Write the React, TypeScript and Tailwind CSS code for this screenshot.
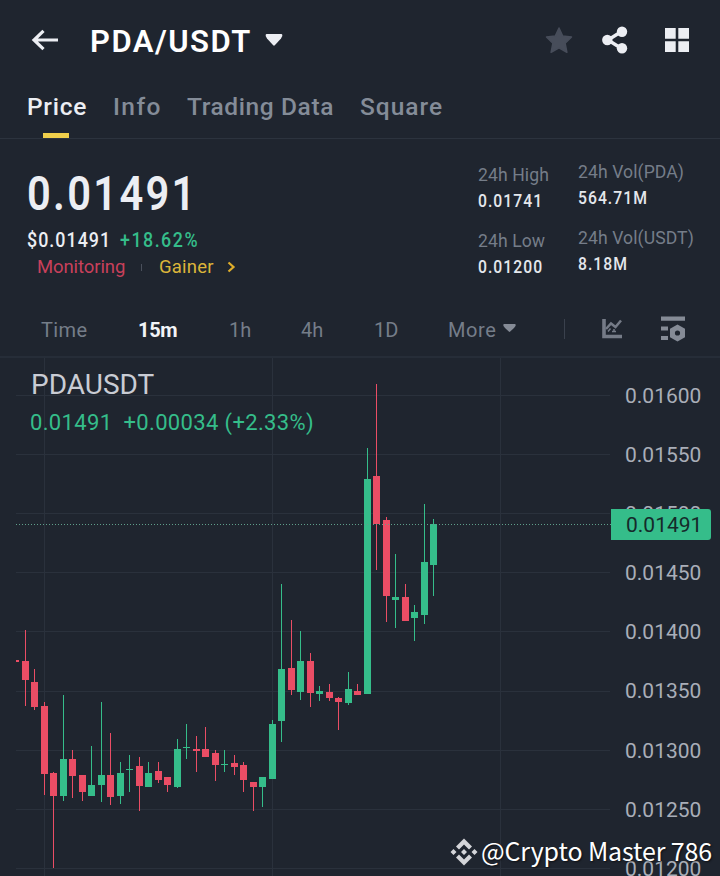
import React from "react";

const UP = "#35bd8a";
const DOWN = "#ea4d65";

// [wick top, body top, body bottom, wick bottom, up?]
type Candle = [number, number, number, number, 0 | 1];

const CANDLES: Candle[] = [
  [630, 661, 680, 706, 0],
  [669, 682, 707, 710, 0],
  [702, 706, 774, 795, 0],
  [772, 773, 796, 868, 0],
  [695, 759, 796, 801, 1],
  [750, 759, 776, 798, 0],
  [775, 775, 792, 801, 0],
  [746, 785, 796, 796, 1],
  [702, 775, 785, 802, 1],
  [733, 775, 797, 805, 0],
  [762, 773, 796, 804, 1],
  [755, 769, 770, 792, 1],
  [757, 766, 786, 811, 0],
  [762, 773, 787, 787, 1],
  [762, 771, 780, 783, 0],
  [777, 777, 785, 792, 0],
  [739, 749, 787, 788, 1],
  [724, 747, 748, 759, 1],
  [736, 749, 751, 772, 0],
  [727, 749, 757, 757, 0],
  [750, 753, 765, 781, 0],
  [750, 764, 765, 772, 1],
  [755, 763, 767, 775, 0],
  [762, 765, 780, 792, 0],
  [782, 782, 787, 811, 0],
  [777, 777, 787, 807, 1],
  [720, 724, 779, 779, 1],
  [584, 669, 721, 742, 1],
  [620, 668, 690, 695, 0],
  [631, 661, 692, 700, 1],
  [653, 661, 693, 707, 0],
  [686, 691, 694, 701, 1],
  [684, 692, 698, 701, 0],
  [697, 698, 702, 730, 0],
  [672, 689, 703, 705, 1],
  [684, 691, 695, 695, 0],
  [448, 479, 694, 694, 1],
  [384, 476, 524, 570, 0],
  [517, 520, 596, 622, 0],
  [554, 597, 600, 628, 1],
  [584, 597, 621, 621, 0],
  [605, 612, 618, 641, 1],
  [504, 562, 615, 624, 1],
  [519, 524, 565, 596, 1],
];

const GRID_Y = [395, 454, 513, 572, 631, 691, 750, 809, 868];
const GRID_X = [44, 272, 500];

const AXIS = [
  "0.01600",
  "0.01550",
  "0.01500",
  "0.01450",
  "0.01400",
  "0.01350",
  "0.01300",
  "0.01250",
  "0.01200",
];

const candleX = (i: number) => 25 + Math.floor(i / 2) * 19 + (i % 2) * 9;

const Header: React.FC = () => (
  <header className="flex h-20 items-center pl-[31px] pr-[30px]">
    <svg className="-mt-px" width="28" height="22" viewBox="0 0 28 22" fill="none" stroke="#eceef3" strokeWidth="3.2">
      <path d="M12.5 1.8 3 11l9.5 9.2M3 11h24" />
    </svg>
    <h1 className="ml-[31px] mt-[3px] w-[161px] whitespace-nowrap text-[31px] font-semibold leading-none tracking-[1.500px] text-white">
      PDA/USDT
    </h1>
    <svg className="ml-[14px]" width="18" height="14" viewBox="0 0 18 14" fill="#eceef3">
      <path d="M1.5 1h15q1 0 .8 2L16 5.500 9.800 12.300q-.8.8-1.600 0L2 5.500.7 3q-.3-2 .8-2z" />
    </svg>
    <svg className="ml-auto" width="28" height="28" viewBox="0 0 28 28" fill="#474d5a">
      <path
        stroke="#474d5a"
        strokeLinejoin="round"
        strokeWidth="1.500"
        d="m14 2 3.700 8 8.800 1-6.400 6.200 1.800 9.100L14 21.800l-7.900 4.500 1.800-9.100L1.500 11l8.800-1z"
      />
    </svg>
    <svg className="-mt-px ml-[28px]" width="28" height="28" viewBox="0 0 28 28" fill="#eceef3">
      <path d="M20.500 5.500 7 14l13.500 8.500" fill="none" stroke="#eceef3" strokeWidth="3.400" />
      <circle cx="21" cy="5.700" r="5.200" />
      <circle cx="21" cy="22.300" r="5.200" />
      <circle cx="6.300" cy="14" r="5.200" />
    </svg>
    <svg className="-mt-px ml-[35px]" width="26" height="26" viewBox="0 0 26 26" fill="#eceef3">
      <path d="M1 1h10.700v10.700H1zM14.300 1H25v10.700H14.300zM1 14.300h10.700V25H1zM14.300 14.300H25V25H14.300z" />
    </svg>
  </header>
);

const Tabs: React.FC = () => (
  <nav className="flex h-[59px] border-b border-[#2c333e] pl-[27px] text-[24.500px] font-medium text-[#848c98]">
    <div className="flex w-[86px] flex-col text-[#eceef3]">
      <span className="h-[53px] leading-[53px] tracking-[0.7px]">Price</span>
      <span className="ml-4 h-[5px] w-[26px] shrink-0 bg-[#f0cf4b]" />
    </div>
    <span className="w-[74px] leading-[53px] tracking-[1.400px]">Info</span>
    <span className="w-[173px] whitespace-nowrap leading-[53px] tracking-[0.600px]">Trading Data</span>
    <span className="leading-[53px] tracking-[1px]">Square</span>
  </nav>
);

const Stat: React.FC<{ label: string; value: string }> = ({ label, value }) => (
  <div className="h-[66px] whitespace-nowrap">
    <p className="origin-left scale-x-[0.95] text-[18.500px] leading-[26px] tracking-[0.100px] text-[#757d89]">{label}</p>
    <p className="origin-left scale-x-[0.85] text-[18.500px] font-medium leading-[26px] tracking-[1.200px] text-[#e4e7ec]">
      {value}
    </p>
  </div>
);

const Summary: React.FC = () => (
  <section className="flex h-[164px] pl-[27px]">
    <div className="w-[451px]">
      <p className="mt-[25px] origin-left scale-x-[0.85] text-[49px] font-semibold leading-[60px] tracking-[2.700px] text-[#eceef3]">
        0.01491
      </p>
      <div className="mt-[3px] flex h-[27px] text-[21px] font-medium leading-[27px]">
        <span className="w-[93px] origin-left scale-x-[0.85] tracking-[1.200px] text-[#eceef3]">$0.01491</span>
        <span className="origin-left scale-x-[0.85] tracking-[1.750px] text-[#35bd8a]">+18.62%</span>
      </div>
      <div className="flex h-[27px] items-center pl-[10px] text-[18.500px] leading-[27px]">
        <span className="w-[104px] tracking-[-0.100px] text-[#c9405b]">Monitoring</span>
        <span className="h-[7px] w-px bg-[#4a505c]" />
        <span className="ml-[17px] w-[68px] tracking-[0.200px] text-[#dcb53a]">Gainer</span>
        <svg className="-mt-px" width="9" height="12" viewBox="0 0 9 12" fill="none" stroke="#dfae2b" strokeWidth="2.200">
          <path d="m1.500 1.500 5 4.500-5 4.500" />
        </svg>
      </div>
    </div>
    <div className="w-[100px] pt-[23px]">
      <Stat label="24h High" value="0.01741" />
      <Stat label="24h Low" value="0.01200" />
    </div>
    <div className="pt-5">
      <Stat label="24h Vol(PDA)" value="564.71M" />
      <Stat label="24h Vol(USDT)" value="8.18M" />
    </div>
  </section>
);

const Toolbar: React.FC = () => (
  <div className="flex h-[55px] items-center border-b-2 border-[#262d38] pl-[41px] text-[20px] text-[#757d89]">
    <span className="w-[97px] tracking-[0.400px]">Time</span>
    <span className="w-[91px] font-bold tracking-[-0.300px] text-[#f2f4f7]">15m</span>
    <span className="w-[72px]">1h</span>
    <span className="w-[73px]">4h</span>
    <span className="w-[74px]">1D</span>
    <span className="w-[55px] tracking-[0.600px]">More</span>
    <svg width="13" height="10" viewBox="0 0 13 10" fill="#858b96" className="-mt-1">
      <path d="M1 1h11q1 0 .5 2L11 5 7.200 8.600q-.7.6-1.400 0L2 5 .5 3Q0 1 1 1z" />
    </svg>
    <span className="-mt-[2px] ml-[48px] h-5 w-px bg-[#3a414d]" />
    <svg className="-mt-[2px] ml-[36px]" width="22" height="22" viewBox="0 0 22 22" fill="none" stroke="#757b87" strokeWidth="3">
      <path d="M3 1v17.500h18" strokeWidth="3.600" />
      <path d="m5 11 5-5.500 4.500 3.500L20 2.500" strokeWidth="2.500" />
      <path d="m7 13.500 2.500-3M11 13.500h4M13 11v2" strokeWidth="1.500" />
    </svg>
    <svg className="-mt-px ml-[37px]" width="26" height="28" viewBox="0 0 26 28" fill="#858b96">
      <path d="M1 1.500h24v4.300H1zM1 11.500h7v4H1zM1 21h7v4H1z" />
      <path
        fillRule="evenodd"
        d="m17.500 9.500 7.500 4.300v8.400l-7.500 4.300-7.500-4.300v-8.400zm0 5.900a2.600 2.600 0 1 0 0 5.200 2.600 2.600 0 0 0 0-5.200z"
      />
    </svg>
  </div>
);

const Chart: React.FC = () => (
  <svg width="611" height="518" viewBox="0 358 611 518" shapeRendering="crispEdges" className="shrink-0">
    {GRID_Y.map((y) => (
      <rect key={y} x="16" y={y} width="594" height="1" fill="#2a313c" />
    ))}
    {GRID_X.map((x) => (
      <rect key={x} x={x} y="358" width="1" height="518" fill="#2a313c" />
    ))}
    <rect x="16" y="660" width="3" height="2" fill={DOWN} />
    {CANDLES.map(([hi, top, bottom, lo, up], i) => {
      const x = candleX(i);
      const color = up ? UP : DOWN;
      return (
        <g key={i} fill={color}>
          <rect x={x} y={hi} width="1" height={lo - hi} />
          <rect x={x - 3} y={top} width="7" height={bottom - top} />
        </g>
      );
    })}
    <path d="M16 524.500H611" stroke="#5f9f8b" strokeWidth="1" strokeDasharray="1 2" />
  </svg>
);

const BrandMark: React.FC = () => (
  <svg width="28" height="28" viewBox="0 0 28 28" fill="#d4d5d9">
    <path d="m14 .5 8 8-3 3-5-5-5 5-3-3zM14 27.500l8-8-3-3-5 5-5-5-3 3zM14 11l3 3-3 3-3-3zM3.500 11l3 3-3 3-3-3zM24.500 11l3 3-3 3-3-3z" />
  </svg>
);

export default function App() {
  return (
    <div className="h-[876px] w-[720px] overflow-hidden bg-[#1f252f] font-['Roboto',sans-serif]">
      <Header />
      <Tabs />
      <Summary />
      <Toolbar />
      <main className="relative flex h-[518px] overflow-hidden">
        <Chart />
        <div className="flex flex-col pl-[14px] pt-[8px] text-[21px] text-[#a9aeb8]">
          {AXIS.map((price) => (
            <span key={price} className="h-[59.100px] shrink-0 leading-[60px]">
              {price}
            </span>
          ))}
        </div>
        <div className="absolute left-[30px] top-[10px] whitespace-nowrap">
          <p className="pl-px text-[28px] leading-[34px] text-[#c9ccd4]">PDAUSDT</p>
          <p className="mt-[6px] flex gap-[11px] text-[22px] leading-[30px] tracking-[0.350px] text-[#35bd8a]">
            <span>0.01491</span>
            <span>+0.00034 (+2.33%)</span>
          </p>
        </div>
        <div className="absolute left-[611px] top-[151px] h-[31px] w-[100px] rounded-r-[3px] bg-[#35bd8a] pl-[15px] text-[21px] leading-[32px] text-[#152a2a]">
          0.01491
        </div>
        <div className="absolute left-[450px] top-[477px] flex items-center whitespace-nowrap font-['Noto_Sans_CJK_SC',sans-serif] text-[25px] leading-[36px] tracking-[-0.120px] text-white [text-shadow:1px_1px_2px_rgba(0,0,0,0.6)]">
          <BrandMark />
          <span className="-mt-[3px] ml-[3px]">@Crypto Master 786</span>
        </div>
      </main>
    </div>
  );
}
